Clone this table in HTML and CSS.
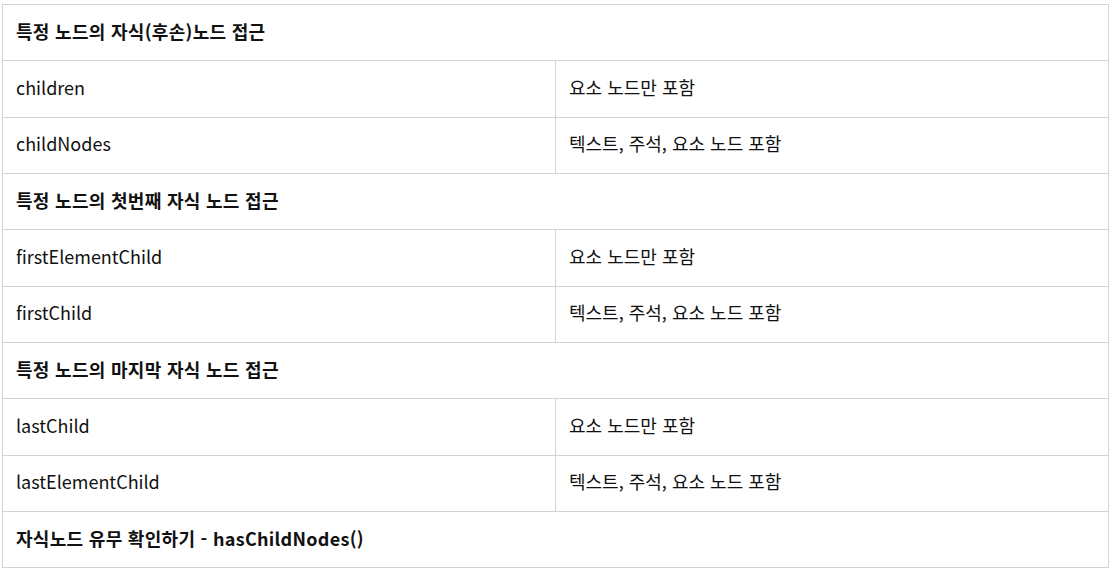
FILE: index.html
```html
<!DOCTYPE html>
<html lang="ko">
<head>
<meta charset="utf-8">
<link rel="stylesheet" href="styles.css">
</head>
<body>
<table class="dom-table">
  <tbody>
    <tr><th colspan="2">특정 노드의 자식(후손)노드 접근</th></tr>
    <tr><td class="c1">children</td><td>요소 노드만 포함</td></tr>
    <tr><td class="c1">childNodes</td><td>텍스트, 주석, 요소 노드 포함</td></tr>
    <tr><th colspan="2">특정 노드의 첫번째 자식 노드 접근</th></tr>
    <tr><td class="c1">firstElementChild</td><td>요소 노드만 포함</td></tr>
    <tr><td class="c1">firstChild</td><td>텍스트, 주석, 요소 노드 포함</td></tr>
    <tr><th colspan="2">특정 노드의 마지막 자식 노드 접근</th></tr>
    <tr><td class="c1">lastChild</td><td>요소 노드만 포함</td></tr>
    <tr><td class="c1">lastElementChild</td><td>텍스트, 주석, 요소 노드 포함</td></tr>
    <tr><th colspan="2">자식노드 유무 확인하기 - hasChildNodes()</th></tr>
  </tbody>
</table>
</body>
</html>
```
FILE: styles.css
```css
html, body {
  background: #ffffff;
}
body {
  margin: 4px 0 0 2px;
  font-family: "Noto Sans CJK KR", "Noto Sans", sans-serif;
  color: #111;
}
.dom-table {
  border-collapse: collapse;
  width: 1107px;
  table-layout: fixed;
}
.dom-table th,
.dom-table td {
  border: 1px solid #d3d3d3;
  height: 56.33px;
  padding: 0 13px 4px;
  font-size: 18px;
  text-align: left;
  vertical-align: middle;
  box-sizing: border-box;
  line-height: 24px;
}
.dom-table th {
  font-weight: 700;
  letter-spacing: 0.3px;
}
.dom-table td {
  font-weight: 400;
}
.dom-table td.c1 {
  width: 553px;
}
```
